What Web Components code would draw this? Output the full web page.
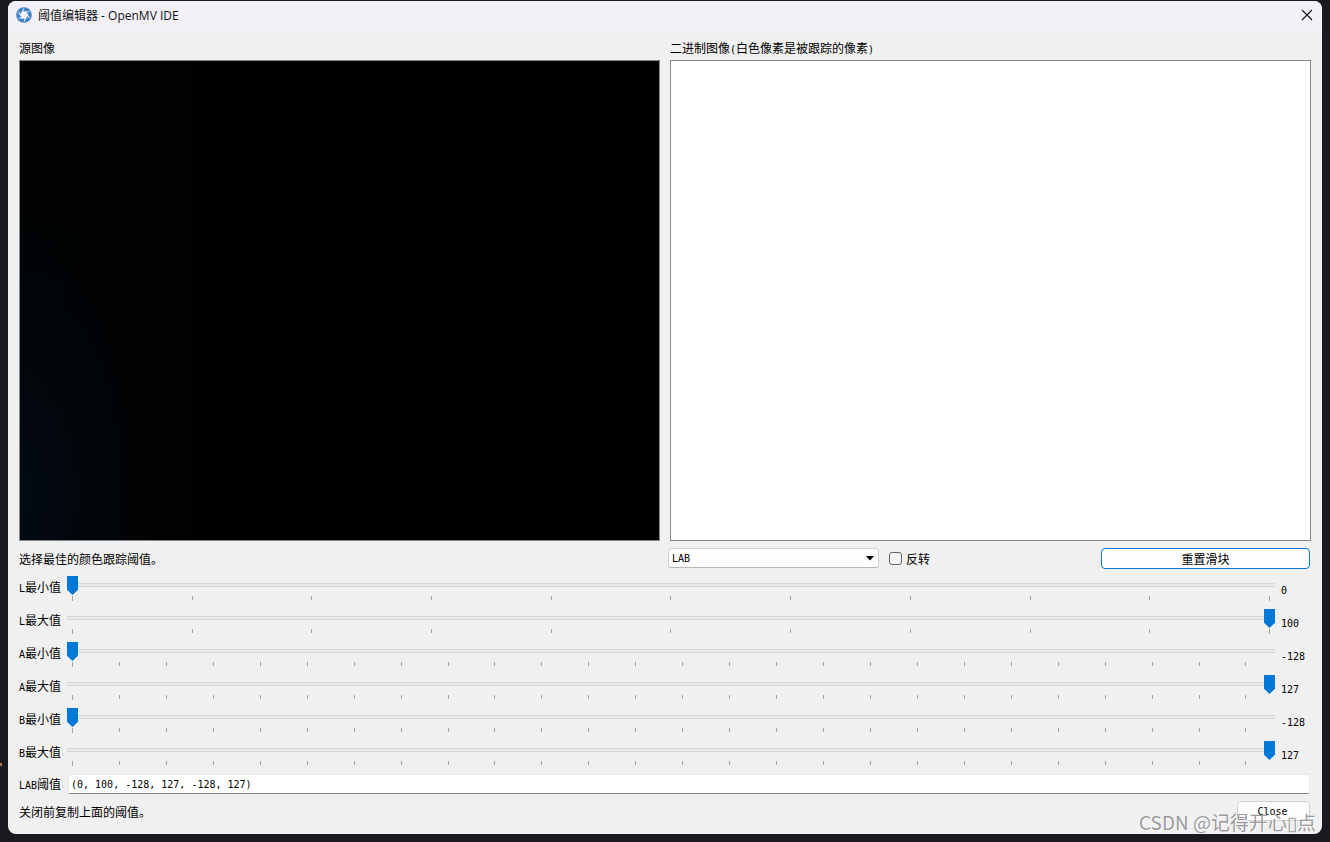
<!DOCTYPE html>
<html lang="zh-CN">
<head>
<meta charset="utf-8">
<title>阈值编辑器 - OpenMV IDE</title>
<style>
  html { background: linear-gradient(#b9783f, #b9783f) 0 763px / 2px 3px no-repeat #191920; }
  body {
    margin: 0;
    padding: 1px 8px 8px;
    font: 12px/20px "Noto Sans CJK SC", sans-serif;
    color: #000;
    --mono: 10px "DejaVu Sans Mono", monospace;
  }
</style>
</head>
<body>
<threshold-editor></threshold-editor>

<template id="t-title">
  <style>
    :host { display: flex; align-items: center; gap: 6px; height: 30px; padding: 0 9px 0 8px; background: #f3f0f8; font: 12px/20px "Open Sans", "Noto Sans CJK SC", sans-serif; color: #111; }
    h1 { flex: 1; margin: 0; font: inherit; }
    button { display: grid; padding: 0 0 2px; border: 0; background: none; color: #111; }
    .logo { margin-bottom: 2px; }
  </style>
  <svg class="logo" width="16" height="16" viewBox="0 0 16 16" aria-hidden="true">
    <circle cx="8" cy="8" r="7.8" fill="#3f83c6"/>
    <path d="M6.2 4.8H9.8L11.6 8 9.8 11.2H6.2L4.4 8Z" fill="#f6f5fb"/>
    <g stroke="#f3f0f8" stroke-width=".9" fill="none">
      <path d="M6.2 4.8H13.6"/>
      <path d="M6.2 4.8H13.6" transform="rotate(60 8 8)"/>
      <path d="M6.2 4.8H13.6" transform="rotate(120 8 8)"/>
      <path d="M6.2 4.8H13.6" transform="rotate(180 8 8)"/>
      <path d="M6.2 4.8H13.6" transform="rotate(240 8 8)"/>
      <path d="M6.2 4.8H13.6" transform="rotate(300 8 8)"/>
    </g>
  </svg>
  <h1><slot></slot></h1>
  <button type="button" aria-label="关闭"><svg width="12" height="12" viewBox="0 0 12 12"><path d="M1 1 11 11M11 1 1 11" stroke="currentColor" stroke-width="1.1"/></svg></button>
</template>

<template id="t-view">
  <style>
    :host { display: block; min-width: 0; }
    figure { margin: 0; }
    figcaption { line-height: 20px; margin-bottom: 2px; white-space: nowrap; }
    .screen { box-sizing: border-box; aspect-ratio: 641 / 481; border: 1px solid #828790; background: #fff; }
    :host([dark]) .screen {
      background:
        radial-gradient(ellipse 22% 60% at 0 90%, #030a12, transparent),
        linear-gradient(90deg, #010304, #010101 30%);
    }
  </style>
  <figure><figcaption><slot></slot></figcaption><div class="screen"></div></figure>
</template>

<template id="t-slider">
  <style>
    :host { display: grid; grid-template-columns: 42px 1fr 30px; column-gap: 6px; height: 28px; }
    label { line-height: 22px; white-space: nowrap; }
    output { font: var(--mono); line-height: 30px; }
    .rail { min-width: 0; }
    input { display: block; appearance: none; width: 100%; height: 19px; margin: 0; background: linear-gradient(#d3d7d6 1px, #e7eaea 1px 3px, #d3d7d6 3px) 0 7px / 100% 4px no-repeat; border: 0; border-radius: 0; }
    input::-webkit-slider-thumb { appearance: none; width: 11px; height: 19px; background: #0078d7; clip-path: polygon(0 0, 100% 0, 100% 72%, 50% 100%, 0 72%); }
    .ticks { display: flex; height: 5px; margin: 1px 5px 0; }
    i { flex: none; width: var(--step); }
    i::before { content: ""; display: block; width: 1px; height: 4px; background: #a5a294; }
    i:first-child::before, i.end::before { height: 5px; }
  </style>
  <label for="r"></label>
  <div class="rail"><input id="r" type="range"><div class="ticks"></div></div>
  <output for="r"></output>
</template>

<template id="t-mark">
  <style>
    :host { position: absolute; right: 6px; bottom: 0; font: 19px/24px "Noto Sans CJK SC", sans-serif; color: rgba(130,130,134,.8); text-shadow: 1px 1px 0 rgba(255,255,255,.7); white-space: nowrap; pointer-events: none; }
  </style>
  <slot></slot>
</template>

<template id="t-editor">
  <style>
    :host { display: block; position: relative; overflow: hidden; border-radius: 8px; background: #f0f0f0; }
    main { padding: 7px 11px 13px; }
    .m { font: var(--mono); }
    .pair { display: grid; grid-template-columns: 1fr 1fr; column-gap: 10px; }
    .tools { grid-template-columns: 639fr 642fr; padding: 7px 1px 0 0; height: 21px; margin-bottom: 7px; line-height: 21px; }
    .controls { display: grid; grid-template-columns: 211fr 202fr 209fr; column-gap: 10px; }
    .pick { position: relative; height: 20px; }
    select { display: block; appearance: none; box-sizing: border-box; width: 100%; height: 20px; padding: 0 3px; border: 1px solid #d0d0d0; border-bottom-color: #b8b8b8; border-radius: 3px; background: #fdfdfd; color: #000; font: var(--mono); }
    .pick svg { position: absolute; right: 5px; top: 8px; pointer-events: none; }
    .invert { display: flex; align-items: center; gap: 4px; height: 20px; }
    input[type=checkbox] { appearance: none; box-sizing: border-box; width: 13px; height: 13px; margin: 0; border: 1px solid #626262; border-radius: 3px; background: #f5f5f5; }
    button { box-sizing: border-box; padding: 0; border: 1px solid #d0d0d0; border-radius: 4px; background: #fdfdfd; color: #000; font: inherit; }
    .reset { height: 21px; border-color: #0078d4; line-height: 18px; }
    .sliders { display: grid; row-gap: 5px; }
    .result { display: grid; grid-template-columns: 42px 1fr; column-gap: 7px; margin: 5px 1px 0 0; height: 20px; line-height: 20px; white-space: nowrap; }
    input[type=text] { box-sizing: border-box; width: 100%; min-width: 0; height: 20px; margin: 0; padding: 0 2px; border: 1px solid #e8e8e8; border-bottom-color: #868686; border-radius: 2px; background: #fff; color: #000; font: var(--mono); }
    footer { display: flex; justify-content: space-between; margin: 7px 1px 0 0; height: 20px; line-height: 22px; }
    footer button { width: 73px; height: 20px; padding-right: 2px; font: var(--mono); }
  </style>
  <title-bar>阈值编辑器 - OpenMV IDE</title-bar>
  <main>
    <div class="pair">
      <image-view dark>源图像</image-view>
      <image-view>二进制图像<span class="m">(</span>白色像素是被跟踪的像素<span class="m">)</span></image-view>
    </div>
    <div class="pair tools">
      <span>选择最佳的颜色跟踪阈值。</span>
      <div class="controls">
        <div class="pick">
          <select aria-label="颜色空间"><option>LAB</option></select>
          <svg width="8" height="5" viewBox="0 0 8 5"><path d="M0 0H8L4 4.5Z"/></svg>
        </div>
        <label class="invert"><input type="checkbox">反转</label>
        <button type="button" class="reset">重置滑块</button>
      </div>
    </div>
    <div class="sliders">
      <threshold-slider channel="L" name="最小值" min="0" max="100" value="0"></threshold-slider>
      <threshold-slider channel="L" name="最大值" min="0" max="100" value="100"></threshold-slider>
      <threshold-slider channel="A" name="最小值" min="-128" max="127" value="-128"></threshold-slider>
      <threshold-slider channel="A" name="最大值" min="-128" max="127" value="127"></threshold-slider>
      <threshold-slider channel="B" name="最小值" min="-128" max="127" value="-128"></threshold-slider>
      <threshold-slider channel="B" name="最大值" min="-128" max="127" value="127"></threshold-slider>
    </div>
    <div class="result">
      <label for="lab"><span class="m">LAB</span>阈值</label>
      <input id="lab" type="text" readonly value="(0, 100, -128, 127, -128, 127)">
    </div>
    <footer><span>关闭前复制上面的阈值。</span><button type="button">Close</button></footer>
  </main>
  <water-mark>CSDN @记得开心▯点</water-mark>
</template>

<script>
  class Templated extends HTMLElement {
    constructor() {
      super();
      this.attachShadow({ mode: "open" }).append(
        document.getElementById(this.constructor.template).content.cloneNode(true));
    }
  }
  class TitleBar extends Templated { static template = "t-title"; }
  class ImageView extends Templated { static template = "t-view"; }
  class WaterMark extends Templated { static template = "t-mark"; }
  class ThresholdSlider extends Templated {
    static template = "t-slider";
    connectedCallback() {
      const $ = s => this.shadowRoot.querySelector(s);
      const min = +this.getAttribute("min"), max = +this.getAttribute("max");
      const range = $("input"), out = $("output"), ticks = $(".ticks");
      const letter = document.createElement("span");
      letter.textContent = this.getAttribute("channel");
      letter.style.font = "var(--mono)";
      $("label").replaceChildren(letter, this.getAttribute("name"));
      range.min = min; range.max = max;
      range.addEventListener("input", () => { out.textContent = range.value; });
      // one tick for every ten units
      ticks.style.setProperty("--step", `calc((100% - 1px) * 10 / ${max - min})`);
      for (let v = min; v <= max; v += 10) {
        const tick = document.createElement("i");
        if (v === max) tick.className = "end";
        ticks.append(tick);
      }
      this.reset();
    }
    reset() {
      const range = this.shadowRoot.querySelector("input");
      range.value = this.getAttribute("value");
      this.shadowRoot.querySelector("output").textContent = range.value;
    }
  }
  class ThresholdEditor extends Templated {
    static template = "t-editor";
    connectedCallback() {
      const root = this.shadowRoot, sliders = [...root.querySelectorAll("threshold-slider")];
      root.querySelector(".reset").addEventListener("click", () => sliders.forEach(s => s.reset()));
    }
  }
  customElements.define("title-bar", TitleBar);
  customElements.define("image-view", ImageView);
  customElements.define("water-mark", WaterMark);
  customElements.define("threshold-slider", ThresholdSlider);
  customElements.define("threshold-editor", ThresholdEditor);
</script>
</body>
</html>
